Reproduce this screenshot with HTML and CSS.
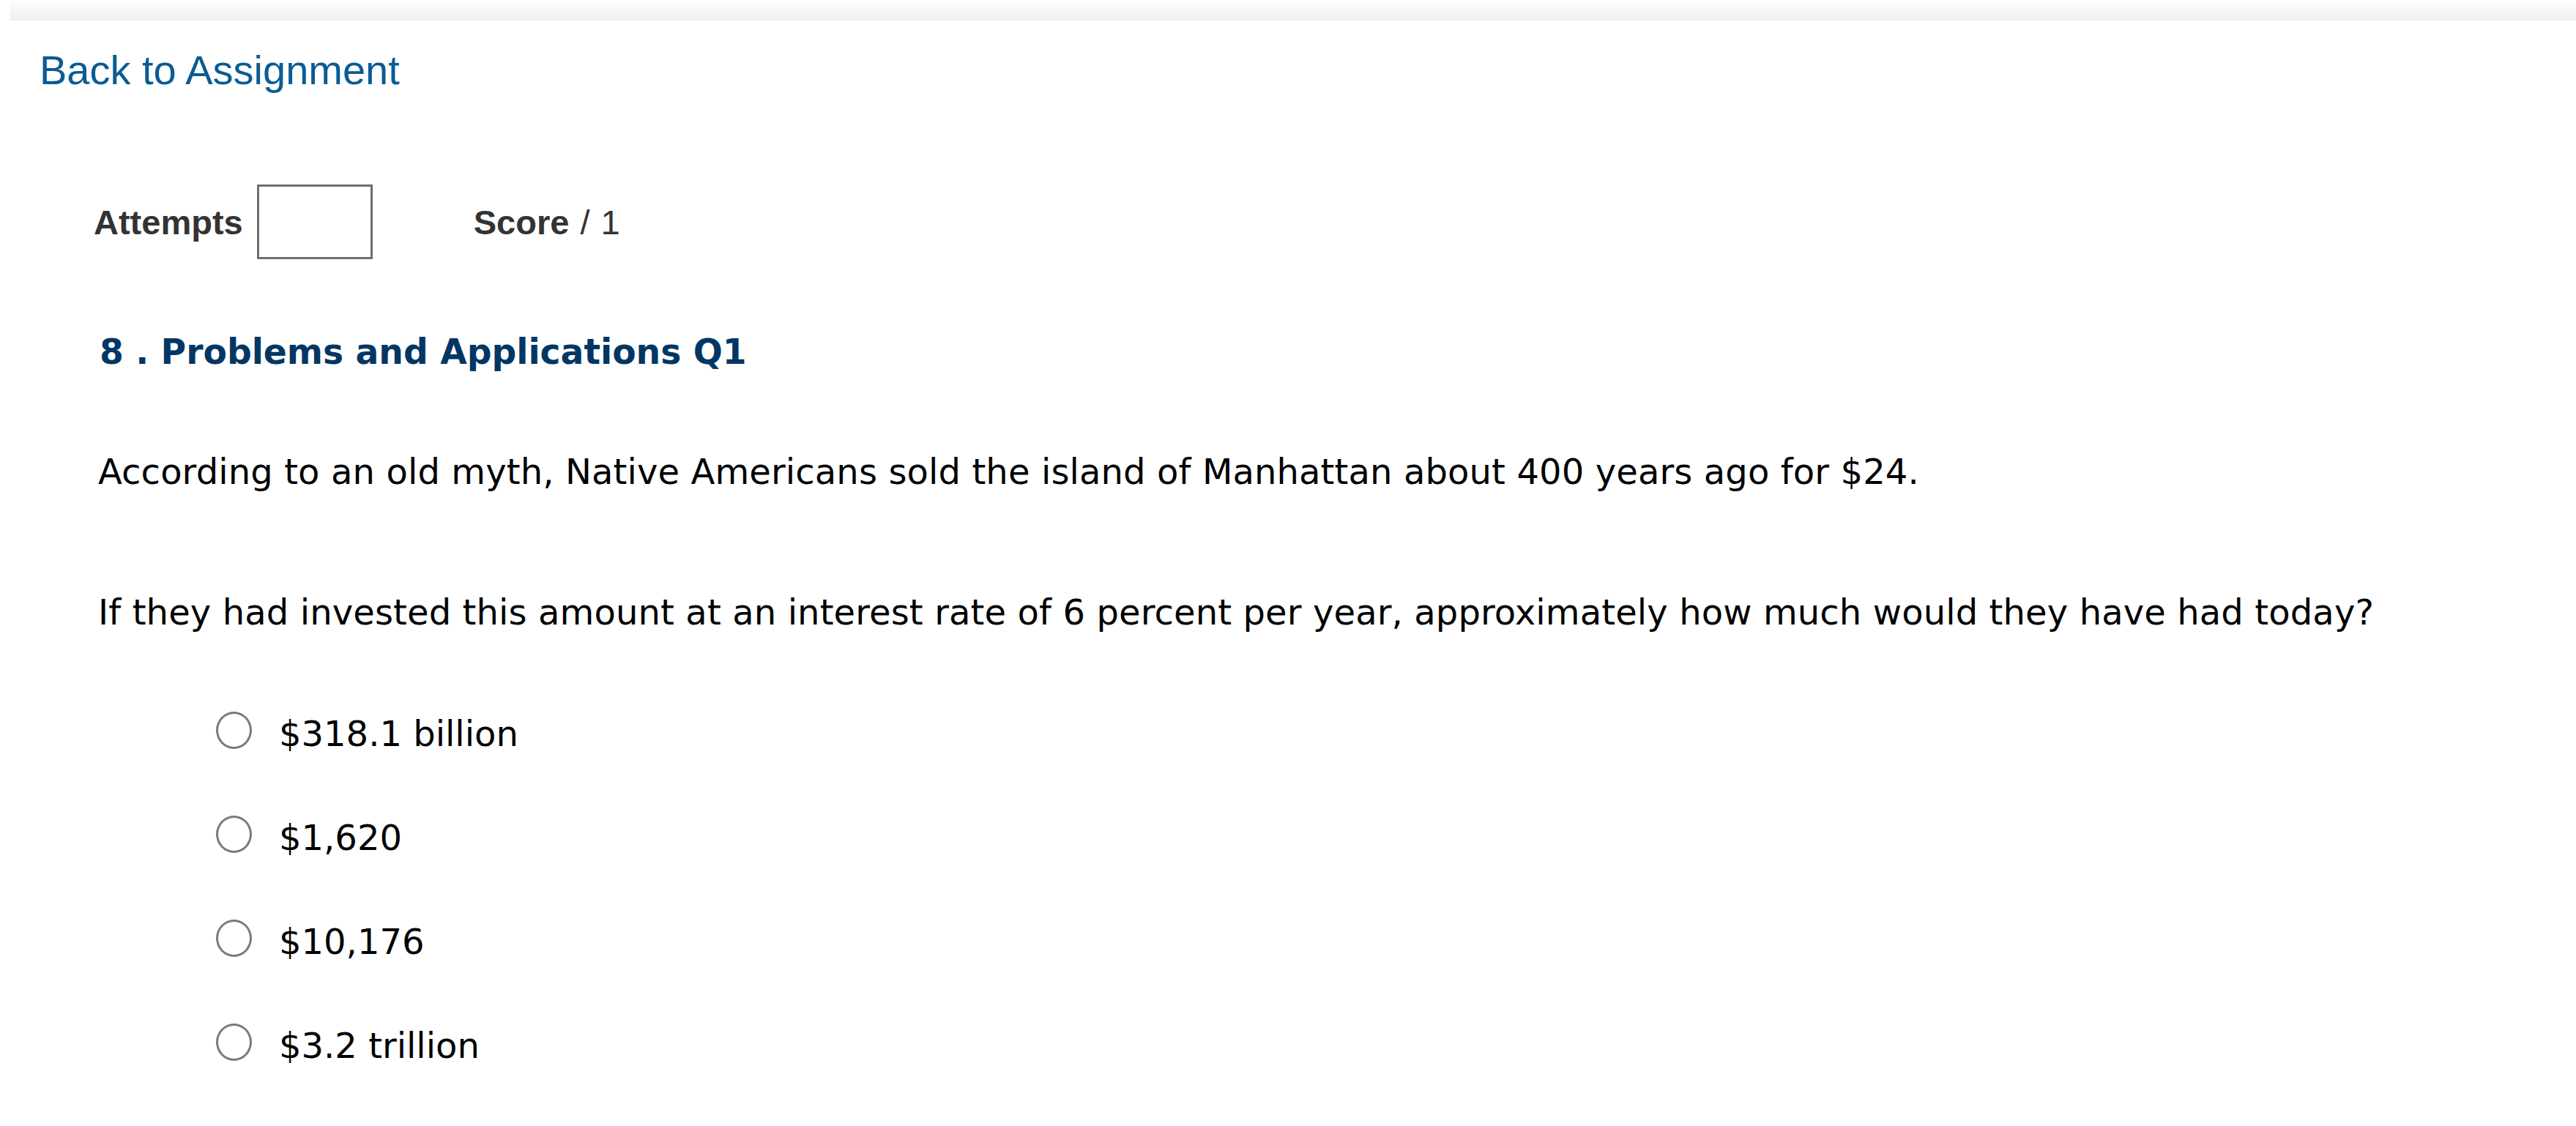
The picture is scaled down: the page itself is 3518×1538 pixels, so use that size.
FILE: index.html
```html
<!DOCTYPE html>
<html lang="en">
<head>
<meta charset="utf-8">
<title>Problems and Applications Q1</title>
<link rel="stylesheet" href="styles.css">
</head>
<body>
<div class="topbar"></div>
<main class="page">
  <a class="back-link" href="#">Back to Assignment</a>
  <div class="status-row">
    <span class="status-label">Attempts</span>
    <span class="attempts-box"></span>
    <span class="score"><b>Score</b> / 1</span>
  </div>
  <h1 class="q-title">8 . Problems and Applications Q1</h1>
  <p class="q-text q-text-first">According to an old myth, Native Americans sold the island of Manhattan about 400 years ago for $24.</p>
  <p class="q-text q-text-second">If they had invested this amount at an interest rate of 6 percent per year, approximately how much would they have had today?</p>
  <ul class="options">
    <li class="option"><span class="radio"></span><span class="option-text">$318.1 billion</span></li>
    <li class="option"><span class="radio"></span><span class="option-text">$1,620</span></li>
    <li class="option"><span class="radio"></span><span class="option-text">$10,176</span></li>
    <li class="option"><span class="radio"></span><span class="option-text">$3.2 trillion</span></li>
  </ul>
</main>
</body>
</html>
```
FILE: styles.css
```css
html, body {
  margin: 0;
  padding: 0;
  background: #ffffff;
}

body {
  font-family: "DejaVu Sans", Verdana, sans-serif;
  color: #000;
}

.topbar {
  margin-left: 14px;
  height: 27px;
  background: linear-gradient(to bottom, #ffffff 0%, #f4f6f6 50%, #eef1f2 100%);
  border-bottom: 1px solid #e6eaeb;
}

.page {
  display: flex;
  flex-direction: column;
  align-items: flex-start;
}

.back-link {
  margin-top: 40px;
  margin-left: 54px;
  font-family: "Liberation Sans", Arial, sans-serif;
  font-size: 56px;
  line-height: 56px;
  color: #0b5b94;
  text-decoration: none;
}

.status-row {
  margin-top: 128px;
  margin-left: 128px;
  display: flex;
  align-items: center;
  height: 102px;
  font-family: "Liberation Sans", Arial, sans-serif;
  font-size: 47px;
  line-height: 47px;
  color: #333333;
}

.status-label {
  font-weight: bold;
}

.attempts-box {
  box-sizing: border-box;
  width: 158px;
  height: 102px;
  margin-left: 19px;
  border: 3px solid #6e6e6e;
  background: #fff;
}

.score {
  margin-left: 138px;
  word-spacing: 2px;
}

.score b {
  font-weight: bold;
}

.q-title {
  margin: 103px 0 0 136px;
  font-family: "DejaVu Sans", Verdana, sans-serif;
  font-weight: bold;
  font-size: 47.2px;
  line-height: 47px;
  color: #023764;
}

.q-text {
  margin: 0 0 0 134px;
  font-size: 48px;
  line-height: 48px;
  letter-spacing: 0.12px;
  color: #000;
}

.q-text-first {
  margin-top: 116px;
}

.q-text-second {
  margin-top: 144px;
}

.options {
  list-style: none;
  margin: 118px 0 0 0;
  padding: 0 0 0 295px;
  display: flex;
  flex-direction: column;
  gap: 94px;
}

.option {
  display: flex;
  align-items: center;
  height: 48px;
  font-size: 48px;
  line-height: 48px;
}

.radio {
  box-sizing: border-box;
  width: 49px;
  height: 51px;
  margin-bottom: 10px;
  border: 3px solid #7a7a7a;
  border-radius: 50%;
  flex: none;
}

.option-text {
  margin-left: 37px;
}
```
